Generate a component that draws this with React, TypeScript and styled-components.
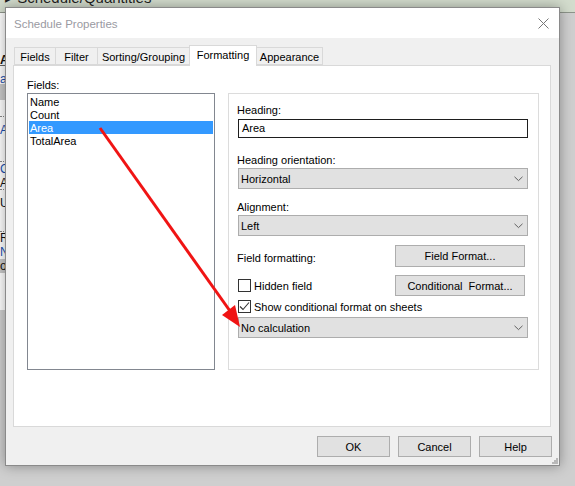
import React from 'react';
import styled, { createGlobalStyle } from 'styled-components';

const Global = createGlobalStyle`
  html, body { margin: 0; padding: 0; }
  body {
    width: 575px;
    height: 486px;
    overflow: hidden;
    background: #cfcfcf;
    font-family: "Liberation Sans", Arial, sans-serif;
  }
  * { box-sizing: border-box; }
`;

const Desktop = styled.div`
  position: relative;
  width: 575px;
  height: 486px;
  overflow: hidden;
  background: #cfcfcf;
  display: flex;
  flex-direction: column;
`;

const BackTitle = styled.div`
  flex: none;
  height: 13px;
  background: #d3dccd;
  border-bottom: 1px solid #8d948a;
  overflow: hidden;
  padding-left: 5px;
`;

const BackTitleText = styled.div`
  font-size: 15px;
  line-height: 15px;
  margin-top: -10px;
  color: #1f1f1f;
  white-space: nowrap;
`;

const BackBody = styled.div`
  flex: 1;
  display: flex;
`;

const SideStrip = styled.div`
  width: 6px;
  height: 297px;
  background: #fff;
  display: flex;
  flex-direction: column;
  overflow: hidden;
  font-size: 12px;
`;

const SideCell = styled.div<{ $h: number; $tone?: string; $color?: string; $bold?: boolean; $line?: string }>`
  flex: none;
  height: ${(p) => p.$h}px;
  line-height: ${(p) => p.$h}px;
  background: ${(p) => p.$tone || 'transparent'};
  color: ${(p) => p.$color || '#111'};
  font-weight: ${(p) => (p.$bold ? 700 : 400)};
  border-bottom: ${(p) => p.$line || 'none'};
  white-space: nowrap;
  padding-left: 0;
`;

const Dialog = styled.div`
  position: absolute;
  left: 5px;
  top: 7px;
  width: 555px;
  height: 459px;
  border: 1px solid #8a8a8a;
  background: #f0f0f0;
  box-shadow: 0 0 12px rgba(0, 0, 0, 0.35);
  display: flex;
  flex-direction: column;
  font-size: 11px;
  color: #000;
`;

const TitleBar = styled.div`
  flex: none;
  height: 30px;
  background: #fff;
  display: flex;
  align-items: center;
  justify-content: space-between;
  padding: 0 10px 0 8px;
`;

const TitleText = styled.div`
  font-size: 11.5px;
  color: #9a9aa2;
  margin-top: 1px;
`;

const Body = styled.div`
  flex: 1;
  display: flex;
  flex-direction: column;
  padding: 7px 8px 8px 7px;
`;

const TabRow = styled.div`
  flex: none;
  height: 20px;
  display: flex;
  align-items: flex-end;
  padding-left: 1px;
  position: relative;
  z-index: 1;
`;

const Tab = styled.div<{ $w: number; $active?: boolean }>`
  flex: none;
  width: ${(p) => p.$w}px;
  height: ${(p) => (p.$active ? 21 : 18)}px;
  margin-right: -1px;
  margin-bottom: ${(p) => (p.$active ? -1 : 0)}px;
  border: 1px solid #d9d9d9;
  border-bottom: ${(p) => (p.$active ? 'none' : '1px solid #d9d9d9')};
  background: ${(p) => (p.$active ? '#fff' : '#f0f0f0')};
  position: relative;
  z-index: ${(p) => (p.$active ? 2 : 0)};
  text-align: center;
  line-height: ${(p) => (p.$active ? 19 : 19)}px;
  white-space: nowrap;
`;

const Panel = styled.div`
  flex: none;
  height: 362px;
  background: #fff;
  border: 1px solid #d9d9d9;
  display: grid;
  grid-template-columns: 188px 311px;
  grid-template-rows: 27px 277px;
  column-gap: 13px;
  padding: 0 11px 0 13px;
`;

const FieldsLabel = styled.div`
  grid-column: 1;
  grid-row: 1;
  align-self: end;
  line-height: 14px;
  margin-bottom: 1px;
`;

const ListBox = styled.div`
  grid-column: 1;
  grid-row: 2;
  border: 1px solid #828790;
  background: #fff;
  padding: 1px;
  display: flex;
  flex-direction: column;
`;

const ListItem = styled.div<{ $selected?: boolean }>`
  height: 13px;
  line-height: 14px;
  padding-left: 1px;
  background: ${(p) => (p.$selected ? '#3399ff' : 'transparent')};
  color: ${(p) => (p.$selected ? '#fff' : '#000')};
  white-space: nowrap;
`;

const GroupBox = styled.div`
  grid-column: 2;
  grid-row: 2;
  border: 1px solid #dcdcdc;
  background: #fff;
  padding: 9px 10px 0 8px;
  display: flex;
  flex-direction: column;
`;

const Label = styled.div<{ $mt: number }>`
  line-height: 14px;
  height: 14px;
  margin-top: ${(p) => p.$mt}px;
  white-space: nowrap;
`;

const TextInput = styled.div<{ $mt: number }>`
  margin-top: ${(p) => p.$mt}px;
  margin-left: 1px;
  height: 19px;
  border: 1px solid #1e1e1e;
  padding-left: 3px;
  line-height: 17px;
  background: #fff;
`;

const Combo = styled.div<{ $mt: number }>`
  margin-top: ${(p) => p.$mt}px;
  margin-left: 1px;
  height: 21px;
  border: 1px solid #adadad;
  background: #e1e1e1;
  display: flex;
  align-items: center;
  justify-content: space-between;
  padding: 0 4px 0 2px;
`;

const ButtonRow = styled.div<{ $mt: number; $align: string }>`
  margin-top: ${(p) => p.$mt}px;
  display: flex;
  justify-content: space-between;
  align-items: ${(p) => p.$align};
`;

const RowLabel = styled.div`
  line-height: 14px;
  margin-bottom: 2px;
`;

const PushButton = styled.div<{ $w: number; $h: number }>`
  flex: none;
  width: ${(p) => p.$w}px;
  height: ${(p) => p.$h}px;
  border: 1px solid #adadad;
  background: #e1e1e1;
  display: flex;
  align-items: center;
  justify-content: center;
  white-space: pre;
`;

const SideButtons = styled.div`
  margin-right: 3px;
  display: flex;
`;

const CheckRow = styled.div<{ $mt?: number }>`
  display: flex;
  align-items: center;
  gap: 3px;
  margin-top: ${(p) => p.$mt || 0}px;
  margin-left: 1px;
  white-space: nowrap;
`;

const CheckBox = styled.span`
  flex: none;
  width: 13px;
  height: 13px;
  border: 1px solid #333;
  background: #fff;
  display: flex;
  align-items: center;
  justify-content: center;
`;

const Footer = styled.div`
  flex: none;
  margin-top: 9px;
  margin-right: -1px;
  display: flex;
  justify-content: flex-end;
  gap: 8px;
`;

const Grip = styled.svg`
  position: absolute;
  right: 1px;
  bottom: 1px;
`;

const Overlay = styled.svg`
  position: absolute;
  left: 0;
  top: 0;
  pointer-events: none;
  z-index: 10;
`;

const Chevron = () => (
  <svg width="9" height="6" viewBox="0 0 9 6">
    <path d="M0.5 0.8 L4.5 4.6 L8.5 0.8" fill="none" stroke="#606060" strokeWidth="1" />
  </svg>
);

const Check = () => (
  <svg width="11" height="11" viewBox="0 0 11 11">
    <path d="M1 5.5 L4 8.5 L10 1.5" fill="none" stroke="#333" strokeWidth="1.1" />
  </svg>
);

const sideRows = [
  { h: 42 },
  { h: 11, text: 'A', bold: true, line: '1px solid #666' },
  { h: 9 },
  { h: 9, text: 'a', color: '#1a4fb0' },
  { h: 16, tone: '#c9c9c9' },
  { h: 17, line: '1px dotted #888' },
  { h: 26, text: 'A', color: '#1a4fb0' },
  { h: 19, line: '1px dotted #888' },
  { h: 14, text: 'C', color: '#1a4fb0' },
  { h: 14, text: 'A.', line: '1px dotted #888' },
  { h: 26, text: 'U' },
  { h: 16, line: '1px dotted #888' },
  { h: 13, text: 'R' },
  { h: 14, text: 'N', color: '#1a4fb0' },
  { h: 14, text: 'ot', tone: '#c9c9c9' },
];

export default function App() {
  return (
    <Desktop>
      <Global />
      <BackTitle>
        <BackTitleText>▸ Schedule/Quantities</BackTitleText>
      </BackTitle>
      <BackBody>
        <SideStrip>
          {sideRows.map((r, i) => (
            <SideCell key={i} $h={r.h} $tone={r.tone} $color={r.color} $bold={r.bold} $line={r.line}>
              {r.text || ''}
            </SideCell>
          ))}
        </SideStrip>
      </BackBody>

      <Dialog>
        <TitleBar>
          <TitleText>Schedule Properties</TitleText>
          <svg width="11" height="11" viewBox="0 0 11 11">
            <path d="M0.5 0.5 L10.5 10.5 M10.5 0.5 L0.5 10.5" stroke="#777" strokeWidth="1" />
          </svg>
        </TitleBar>
        <Body>
          <TabRow>
            <Tab $w={42}>Fields</Tab>
            <Tab $w={43}>Filter</Tab>
            <Tab $w={93}>Sorting/Grouping</Tab>
            <Tab $w={68} $active>Formatting</Tab>
            <Tab $w={67}>Appearance</Tab>
          </TabRow>
          <Panel>
            <FieldsLabel>Fields:</FieldsLabel>
            <ListBox>
              <ListItem>Name</ListItem>
              <ListItem>Count</ListItem>
              <ListItem $selected>Area</ListItem>
              <ListItem>TotalArea</ListItem>
            </ListBox>
            <GroupBox>
              <Label $mt={0}>Heading:</Label>
              <TextInput $mt={2}>Area</TextInput>
              <Label $mt={15}>Heading orientation:</Label>
              <Combo $mt={1}>
                <span>Horizontal</span>
                <Chevron />
              </Combo>
              <Label $mt={11}>Alignment:</Label>
              <Combo $mt={1}>
                <span>Left</span>
                <Chevron />
              </Combo>
              <ButtonRow $mt={9} $align="flex-end">
                <RowLabel>Field formatting:</RowLabel>
                <SideButtons>
                  <PushButton $w={130} $h={22}>Field Format...</PushButton>
                </SideButtons>
              </ButtonRow>
              <ButtonRow $mt={8} $align="center">
                <CheckRow>
                  <CheckBox />
                  <span>Hidden field</span>
                </CheckRow>
                <SideButtons>
                  <PushButton $w={130} $h={21}>{'Conditional  Format...'}</PushButton>
                </SideButtons>
              </ButtonRow>
              <CheckRow $mt={4}>
                <CheckBox>
                  <Check />
                </CheckBox>
                <span>Show conditional format on sheets</span>
              </CheckRow>
              <Combo $mt={4}>
                <span>No calculation</span>
                <Chevron />
              </Combo>
            </GroupBox>
          </Panel>
          <Footer>
            <PushButton $w={73} $h={21}>OK</PushButton>
            <PushButton $w={73} $h={21}>Cancel</PushButton>
            <PushButton $w={73} $h={21}>Help</PushButton>
          </Footer>
        </Body>
        <Grip width="7" height="7" viewBox="0 0 7 7">
          <rect x="5" y="1" width="2" height="2" fill="#b8b8b8" />
          <rect x="3" y="3" width="2" height="2" fill="#b8b8b8" />
          <rect x="5" y="3" width="2" height="2" fill="#b8b8b8" />
          <rect x="1" y="5" width="2" height="2" fill="#b8b8b8" />
          <rect x="3" y="5" width="2" height="2" fill="#b8b8b8" />
          <rect x="5" y="5" width="2" height="2" fill="#b8b8b8" />
        </Grip>
      </Dialog>

      <Overlay width="575" height="486" viewBox="0 0 575 486">
        <line x1="100" y1="128" x2="230" y2="311" stroke="#f01414" strokeWidth="3" />
        <polygon points="240,327 222,315 235,305" fill="#f01414" />
      </Overlay>
    </Desktop>
  );
}
